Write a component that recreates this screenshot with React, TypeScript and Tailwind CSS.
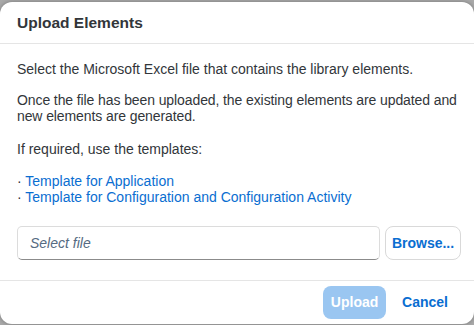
export default function App() {
  return (
    <div className="h-[325px] w-[474px] overflow-hidden bg-[#a9a9a9] pt-[2px]" style={{ fontFamily: '"Liberation Sans", Arial, sans-serif' }}>
      <div className="flex h-[322px] flex-col rounded-[12px] bg-white text-[#32363a] shadow-[0_0_4px_rgba(0,0,0,0.3)]">
        {/* header */}
        <div className="flex h-[42px] items-center border-b border-[#e5e5e5] px-[17px]">
          <h1 className="text-[15.5px] font-bold text-[#32363a]">Upload Elements</h1>
        </div>

        {/* body */}
        <div className="flex flex-1 flex-col pl-[17px] pr-[12px] pt-[17px] text-[14px] leading-[16px]">
          <p className="whitespace-nowrap">Select the Microsoft Excel file that contains the library elements.</p>
          <p className="mt-[15px] whitespace-nowrap tracking-[-0.1px]">
            Once the file has been uploaded, the existing elements are updated and
            <br />
            new elements are generated.
          </p>
          <p className="mt-[17px]">If required, use the templates:</p>
          <div className="mt-[16px] flex flex-col">
            <span>· <a className="text-[#0a6ed1]">Template for Application</a></span>
            <span>· <a className="text-[#0a6ed1]">Template for Configuration and Configuration Activity</a></span>
          </div>
          <div className="mt-[21px] flex gap-[5px]">
            <div className="flex h-[34px] w-[363px] shrink-0 items-center rounded-[5px] border border-[#dcdcdc] border-b-[#8b8b8b] px-[12px]">
              <span className="italic text-[#556b82]">Select file</span>
            </div>
            <button className="h-[34px] w-[76px] shrink-0 rounded-[8px] border border-[#d9d9d9] bg-white text-[14px] font-bold text-[#0a6ed1]">Browse...</button>
          </div>
        </div>

        {/* footer */}
        <div className="flex h-[44px] items-center justify-end gap-[12px] border-t border-[#e5e5e5] pr-[22px]">
          <button className="h-[33px] w-[63px] rounded-[8px] bg-[#9ac6f1] text-[14px] font-bold text-white">Upload</button>
          <button className="h-[33px] px-[4px] text-[14px] font-bold text-[#0a6ed1]">Cancel</button>
        </div>
      </div>
    </div>
  )
}
